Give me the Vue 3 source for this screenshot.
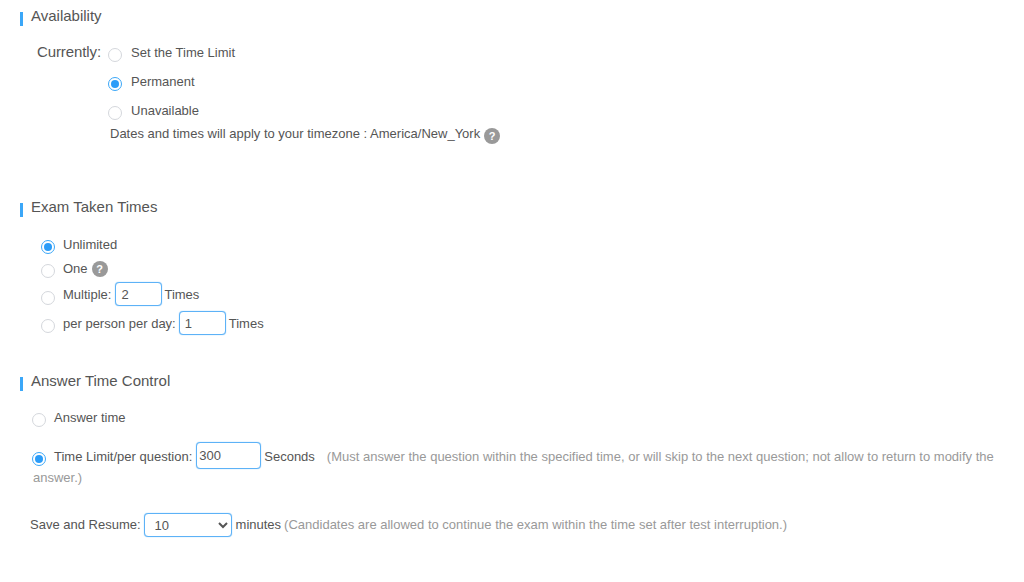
<script setup>
const availability = [
  { label: 'Set the Time Limit', on: false },
  { label: 'Permanent', on: true },
  { label: 'Unavailable', on: false }
]
</script>

<template>
  <main class="page">
    <section class="sec-a">
      <h3 class="title">Availability</h3>
      <div class="avail">
        <span class="currently">Currently:</span>
        <div class="avail-list">
          <label v-for="o in availability" :key="o.label" class="row avail-row">
            <i class="radio" :class="{ on: o.on }"></i>
            <span>{{ o.label }}</span>
          </label>
        </div>
      </div>
      <p class="tz">Dates and times will apply to your timezone : America/New_York<b class="help tz-help">?</b></p>
    </section>

    <section class="sec-b">
      <h3 class="title">Exam Taken Times</h3>
      <div class="times">
        <label class="row r-unl"><i class="radio on"></i><span>Unlimited</span></label>
        <label class="row r-one"><i class="radio"></i><span>One</span><b class="help one-help">?</b></label>
        <label class="row r-mul"><i class="radio"></i><span>Multiple:</span><input class="num mul-num" value="2" /><span>Times</span></label>
        <label class="row r-per"><i class="radio"></i><span>per person per day:</span><input class="num" value="1" /><span>Times</span></label>
      </div>
    </section>

    <section class="sec-c">
      <h3 class="title">Answer Time Control</h3>
      <label class="row r-ans"><i class="radio"></i><span>Answer time</span></label>
      <div class="limit">
        <i class="radio on inline-radio"></i><span>Time Limit/per question:</span><input class="num wide" value="300" /><span class="sec-label">Seconds</span><span class="note">(Must answer the question within the specified time, or will skip to the next question; not allow to return to modify the answer.)</span>
      </div>
      <div class="resume">
        <span>Save and Resume:</span>
        <select class="sel"><option>10</option></select>
        <span>minutes</span>
        <span class="note">(Candidates are allowed to continue the exam within the time set after test interruption.)</span>
      </div>
    </section>
  </main>
</template>

<style scoped>
.page {
  width: 1024px;
  height: 582px;
  overflow: hidden;
  box-sizing: border-box;
  background: #fff;
  color: #555;
  font: 13px/16px "Liberation Sans", Arial, sans-serif;
}
.title {
  margin: 0 0 0 20px;
  height: 16px;
  font-size: 15px;
  line-height: 16px;
  font-weight: 400;
  color: #555;
  position: relative;
  padding-left: 11px;
}
.title::before {
  content: "";
  position: absolute;
  left: 0;
  top: 4px;
  width: 3px;
  height: 14px;
  background: #3ba7f8;
}
.row {
  display: flex;
  align-items: center;
  height: 16px;
}
.radio {
  flex: none;
  display: inline-block;
  box-sizing: border-box;
  width: 14px;
  height: 14px;
  border: 1px solid #d4d7dc;
  border-radius: 50%;
  background: #fff;
  margin-right: 8px;
  position: relative;
  top: 2px;
}
.radio.on {
  border-color: #3ba7f8;
}
.radio.on::after {
  content: "";
  position: absolute;
  inset: 2px;
  border-radius: 50%;
  background: #2b9cf8;
}
.sec-a {
  padding-top: 8px;
}
.avail {
  display: flex;
  margin-top: 12px;
  padding-left: 37px;
}
.currently {
  font-size: 15px;
  letter-spacing: -0.1px;
  line-height: 18px;
  margin-right: 7px;
  margin-top: 7px;
}
.avail-list {
  margin-top: 9px;
  display: flex;
  flex-direction: column;
  gap: 13px;
}
.avail-row .radio {
  margin-right: 9px;
}
.tz {
  margin: 7px 0 0 110px;
  height: 18px;
}
.help {
  display: inline-block;
  width: 16px;
  height: 16px;
  border-radius: 50%;
  background: #999;
  color: #fff;
  font-size: 11px;
  line-height: 16px;
  text-align: center;
  vertical-align: -2px;
}
.tz-help {
  margin-left: 4px;
}
.sec-b {
  padding-top: 55px;
}
.times {
  margin-top: 22px;
  padding-left: 41px;
}
.r-one {
  margin-top: 8px;
}
.one-help {
  margin-left: 4px;
}
.r-mul {
  margin-top: 6px;
  height: 24px;
}
.r-mul .radio {
  top: 3px;
}
.r-per {
  margin-top: 5px;
  height: 24px;
}
.num {
  box-sizing: border-box;
  width: 47px;
  height: 24px;
  margin: 0 3px 2px;
  padding: 0 5px;
  border: 1px solid #5db2f7;
  border-radius: 4px;
  box-shadow: 0 0 1px #5db2f7;
  outline: none;
  color: #555;
  font: 13px "Liberation Sans", Arial, sans-serif;
}
.mul-num {
  margin: 0 2px 2px 4px;
}
.sec-c {
  padding-top: 37px;
}
.r-ans {
  margin: 21px 0 0 32px;
}
.limit {
  margin: 16px 20px 0 33px;
  line-height: 18px;
}
.inline-radio {
  margin-left: -1px;
  vertical-align: -5px;
  top: 0;
}
.wide {
  width: 65px;
  height: 27px;
  padding: 0 2px;
  margin: 0 3px 0 4px;
  vertical-align: 1px;
}
.sec-label {
  margin-right: 12px;
}
.note {
  color: #999;
}
.resume {
  margin: 26px 0 0 30px;
  display: flex;
  align-items: center;
  height: 24px;
  white-space: nowrap;
}
.sel {
  box-sizing: border-box;
  width: 88px;
  height: 24px;
  margin: 0 4px 0 3px;
  padding: 0 6px;
  border: 1px solid #5db2f7;
  border-radius: 4px;
  box-shadow: 0 0 1px #5db2f7;
  background: #fff;
  color: #555;
  font: 13px "Liberation Sans", Arial, sans-serif;
  outline: none;
}
.resume .note {
  margin-left: 3px;
}
</style>
